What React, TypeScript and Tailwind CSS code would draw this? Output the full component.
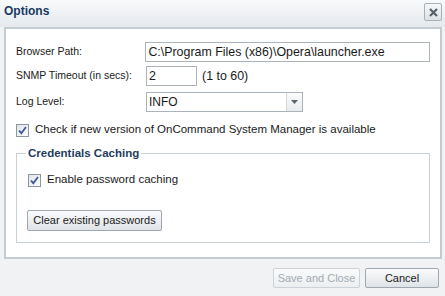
import React from "react";

const font = { fontFamily: '"Liberation Sans", Arial, sans-serif' };

function Check() {
  return (
    <svg width="13" height="13" viewBox="0 0 13 13" className="shrink-0">
      <defs>
        <linearGradient id="cbg" x1="0" y1="0" x2="1" y2="1">
          <stop offset="0" stopColor="#dfe3e8" />
          <stop offset="1" stopColor="#ffffff" />
        </linearGradient>
      </defs>
      <rect x="0.5" y="0.5" width="12" height="12" fill="url(#cbg)" stroke="#8e97a1" />
      <path d="M3 6.5 L5.3 9.2 L10 3" fill="none" stroke="#3c5a9a" strokeWidth="1.8" />
    </svg>
  );
}

export default function App() {
  return (
    <div
      className="w-[445px] h-[296px] bg-[#f0f2f4] flex flex-col text-[#1a1a1a] overflow-hidden"
      style={font}
    >
      {/* Title bar */}
      <div className="h-[27px] flex items-start justify-between pl-[4px] pr-[3px] pt-[3px] bg-gradient-to-b from-[#f9fafb] to-[#e5e9ed]">
        <div className="text-[12px] font-bold text-[#183a62] leading-[16px]">Options</div>
        <div className="w-[18px] h-[18px] border border-[#a7b0b9] rounded-[2px] bg-gradient-to-b from-[#f6f7f8] to-[#dde2e6] flex items-center justify-center">
          <svg width="9" height="9" viewBox="0 0 9 9">
            <path d="M1 1 L8 8 M8 1 L1 8" stroke="#5a6068" strokeWidth="2.2" />
          </svg>
        </div>
      </div>

      {/* Panel */}
      <div className="ml-[4px] mr-[3px] h-[232px] bg-white border-2 border-[#c3cbd3] pl-[10px] pr-[10px] pt-[13px]">
        <div className="flex items-center h-[20px]">
          <div className="w-[130px] text-[10.5px]">Browser Path:</div>
          <div className="w-[286px] h-[20px] border border-[#aab2bb] flex items-center pl-[2px] text-[12.4px]">
            C:\Program Files (x86)\Opera\launcher.exe
          </div>
        </div>
        <div className="flex items-center h-[20px] mt-[4px]">
          <div className="w-[130px] text-[10.5px]">SNMP Timeout (in secs):</div>
          <div className="w-[51px] h-[20px] border border-[#aab2bb] flex items-center pl-[2px] text-[12.4px]">
            2
          </div>
          <div className="ml-[5px] text-[12.4px]">(1 to 60)</div>
        </div>
        <div className="flex items-center h-[20px] mt-[6px]">
          <div className="w-[130px] text-[10.5px]">Log Level:</div>
          <div className="w-[157px] h-[20px] border border-[#aab2bb] flex items-stretch">
            <div className="flex-1 flex items-center pl-[2px] text-[12px]">INFO</div>
            <div className="w-[16px] border-l border-[#d3d8dd] bg-gradient-to-b from-[#fbfbfc] to-[#e8ebee] flex items-center justify-center">
              <svg width="7" height="4" viewBox="0 0 7 4">
                <path d="M0 0 L7 0 L3.5 4 Z" fill="#5b6470" />
              </svg>
            </div>
          </div>
        </div>
        <div className="flex items-center gap-[6px] mt-[11px] h-[14px]">
          <Check />
          <span className="text-[11.5px]">
            Check if new version of OnCommand System Manager is available
          </span>
        </div>

        <fieldset className="mt-[8px] w-[414px] h-[98px] border border-[#c8d0d8] pl-[11px]">
          <legend className="ml-[-2px] px-[2px] text-[11.5px] font-bold text-[#1f3d60] leading-[16px]">
            Credentials Caching
          </legend>
          <div className="flex items-center gap-[6px] mt-[12px] h-[14px]">
            <Check />
            <span className="text-[11.5px]">Enable password caching</span>
          </div>
          <button className="mt-[23px] ml-[-1px] w-[135px] h-[21px] border border-[#9fa8b1] rounded-[2px] bg-gradient-to-b from-[#fbfbfc] to-[#dfe3e7] text-[11px] text-[#1a1a1a] flex items-center justify-center">
            Clear existing passwords
          </button>
        </fieldset>
      </div>

      {/* Footer */}
      <div className="flex justify-end gap-[5px] pr-[6px] pt-[9px]">
        <button className="w-[87px] h-[20px] border border-[#cdd2d7] rounded-[2px] bg-gradient-to-b from-[#fafbfb] to-[#eceef0] text-[11px] text-[#a3abb3] flex items-center justify-center">
          Save and Close
        </button>
        <button className="w-[74px] h-[20px] border border-[#9fa8b1] rounded-[2px] bg-gradient-to-b from-[#fbfbfc] to-[#dfe3e7] text-[11px] text-[#1a1a1a] flex items-center justify-center">
          Cancel
        </button>
      </div>
    </div>
  );
}
